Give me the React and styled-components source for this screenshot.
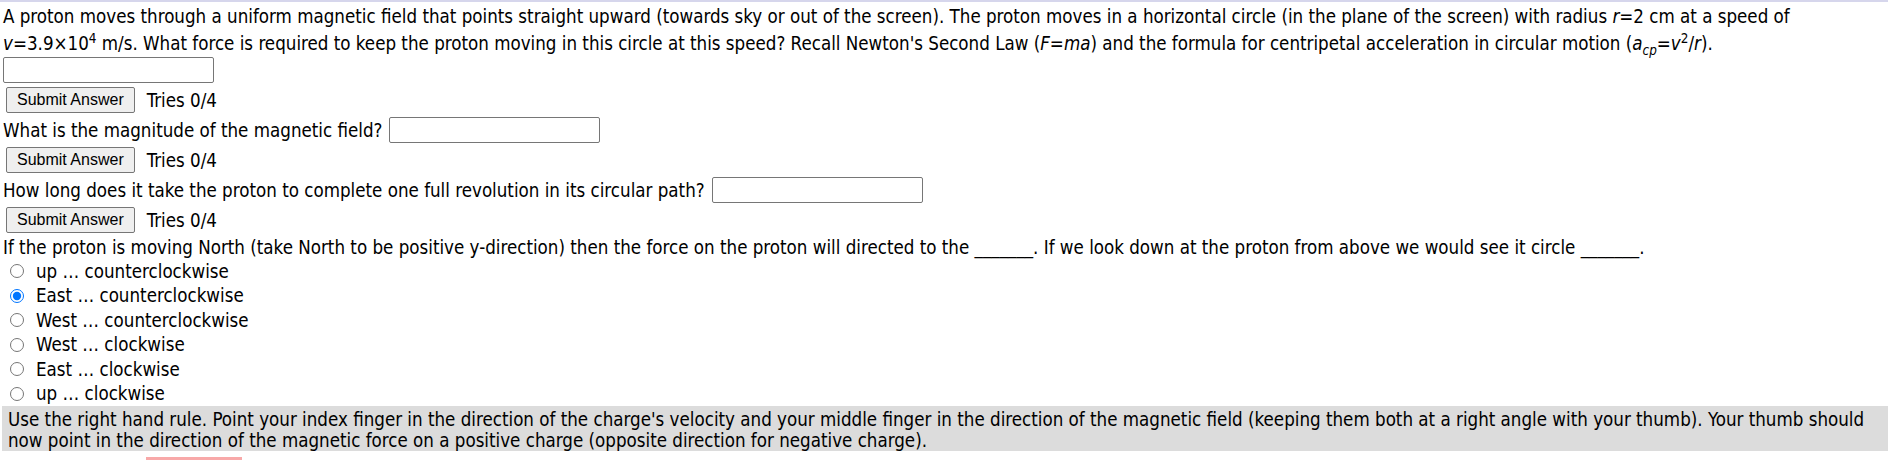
import React from "react";
import styled, { createGlobalStyle } from "styled-components";

const GlobalStyle = createGlobalStyle`
  html, body { margin: 0; padding: 0; background: #ffffff; }
  body {
    color: #000000;
    font-family: "DejaVu Sans Condensed", "DejaVu Sans", sans-serif;
    font-stretch: condensed;
    font-size: 18.6px;
    line-height: 21px;
  }
`;

const Page = styled.div`
  width: 1888px;
  border-top: 2px solid #d6d6ec;
`;

const Question = styled.div`
  padding: 1px 3px 0;
  line-height: 27px;
`;

const Var = styled.i`
  font-style: italic;
`;

const Sup = styled.sup`
  font-size: 0.72em;
  vertical-align: super;
  line-height: 0;
`;

const Sub = styled.sub`
  font-size: 0.72em;
  vertical-align: sub;
  line-height: 0;
  font-style: italic;
`;

const Form = styled.div`
  display: flex;
  flex-direction: column;
  gap: 4px;
  padding: 0 3px;
`;

const Row = styled.div`
  display: flex;
  align-items: center;
  height: 26px;
`;

const AnswerInput = styled.input.attrs({ type: "text" })`
  box-sizing: border-box;
  width: 211px;
  height: 26px;
  margin: 0 0 0 ${(p) => (p.$inline ? "7px" : "0")};
  padding: 1px 3px;
  border: 1px solid #767676;
  border-radius: 2px;
  background: #ffffff;
  font: inherit;
`;

const SubmitButton = styled.button`
  box-sizing: border-box;
  height: 26px;
  margin: 0 0 0 3px;
  padding: 0 10px;
  background: #efefef;
  border: 1px solid #767676;
  border-radius: 2px;
  color: #000000;
  font-family: "Liberation Sans", Arial, sans-serif;
  font-size: 16px;
  line-height: 1;
`;

const Tries = styled.span`
  margin-left: 12px;
`;

const Prompt = styled.div`
  line-height: 21px;
`;

const RadioList = styled.div`
  display: flex;
  flex-direction: column;
  margin-top: -3px;
`;

const RadioRow = styled.label`
  display: flex;
  align-items: center;
  height: 24.5px;
`;

const Radio = styled.input.attrs({ type: "radio", name: "dir" })`
  width: 14px;
  height: 14px;
  margin: 0 12px 0 7px;
  accent-color: #0075ff;
`;

const Hint = styled.div`
  box-sizing: border-box;
  height: 45px;
  margin-left: 2px;
  padding: 3px 5px 0 6px;
  background: #dcdcdc;
`;

const PinkBar = styled.div`
  width: 96px;
  height: 4px;
  margin: 6px 0 0 146px;
  background: #f8a9a9;
`;

const options = [
  "up … counterclockwise",
  "East … counterclockwise",
  "West … counterclockwise",
  "West … clockwise",
  "East … clockwise",
  "up … clockwise",
];

function SubmitRow() {
  return (
    <Row>
      <SubmitButton type="button">Submit Answer</SubmitButton>
      <Tries>Tries 0/4</Tries>
    </Row>
  );
}

export default function App() {
  return (
    <>
      <GlobalStyle />
      <Page>
        <Question>
          A proton moves through a uniform magnetic field that points straight upward (towards sky or out of the
          screen). The proton moves in a horizontal circle (in the plane of the screen) with radius <Var>r</Var>=2 cm at
          a speed of
          <br />
          <Var>v</Var>=3.9×10<Sup>4</Sup> m/s. What force is required to keep the proton moving in this circle at this
          speed? Recall Newton's Second Law (<Var>F</Var>=<Var>ma</Var>) and the formula for centripetal acceleration in
          circular motion (<Var>a</Var>
          <Sub>cp</Sub>=<Var>v</Var>
          <Sup>2</Sup>/<Var>r</Var>).
        </Question>
        <Form>
          <Row>
            <AnswerInput />
          </Row>
          <SubmitRow />
          <Row>
            What is the magnitude of the magnetic field?
            <AnswerInput $inline />
          </Row>
          <SubmitRow />
          <Row>
            How long does it take the proton to complete one full revolution in its circular path?
            <AnswerInput $inline />
          </Row>
          <SubmitRow />
          <Prompt>
            If the proton is moving North (take North to be positive y-direction) then the force on the proton will
            directed to the _______. If we look down at the proton from above we would see it circle _______.
          </Prompt>
          <RadioList>
            {options.map((o, i) => (
              <RadioRow key={o}>
                <Radio defaultChecked={i === 1} />
                {o}
              </RadioRow>
            ))}
          </RadioList>
        </Form>
        <Hint>
          Use the right hand rule. Point your index finger in the direction of the charge's velocity and your middle
          finger in the direction of the magnetic field (keeping them both at a right angle with your thumb). Your thumb
          should now point in the direction of the magnetic force on a positive charge (opposite direction for negative
          charge).
        </Hint>
        <PinkBar />
      </Page>
    </>
  );
}
